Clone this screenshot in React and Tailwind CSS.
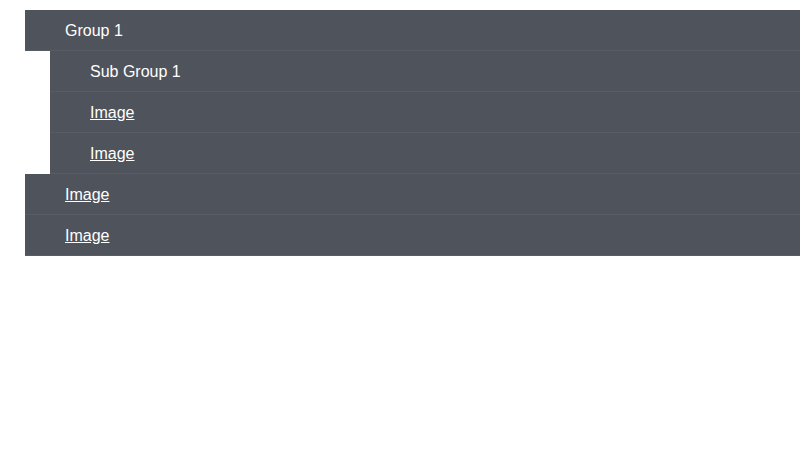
const rowCls = 'flex items-center h-[41px] pl-10 pt-[2px] border-b border-[#585c64] text-white text-base';

function Row({ children, link }) {
  return (
    <div className={rowCls}>
      {link ? <a href="#" className="underline">{children}</a> : <span>{children}</span>}
    </div>
  );
}

export default function App() {
  return (
    <div className="pt-[10px] pl-[25px] bg-white min-h-[450px]" style={{ fontFamily: '"Liberation Sans", Arial, sans-serif' }}>
      <div className="bg-[#4f535b]">
        <Row>Group 1</Row>
        <div className="bg-white">
          <div className="ml-[25px] bg-[#4f535b]">
            <Row>Sub Group 1</Row>
            <Row link>Image</Row>
            <Row link>Image</Row>
          </div>
        </div>
        <Row link>Image</Row>
        <Row link>Image</Row>
      </div>
    </div>
  );
}
